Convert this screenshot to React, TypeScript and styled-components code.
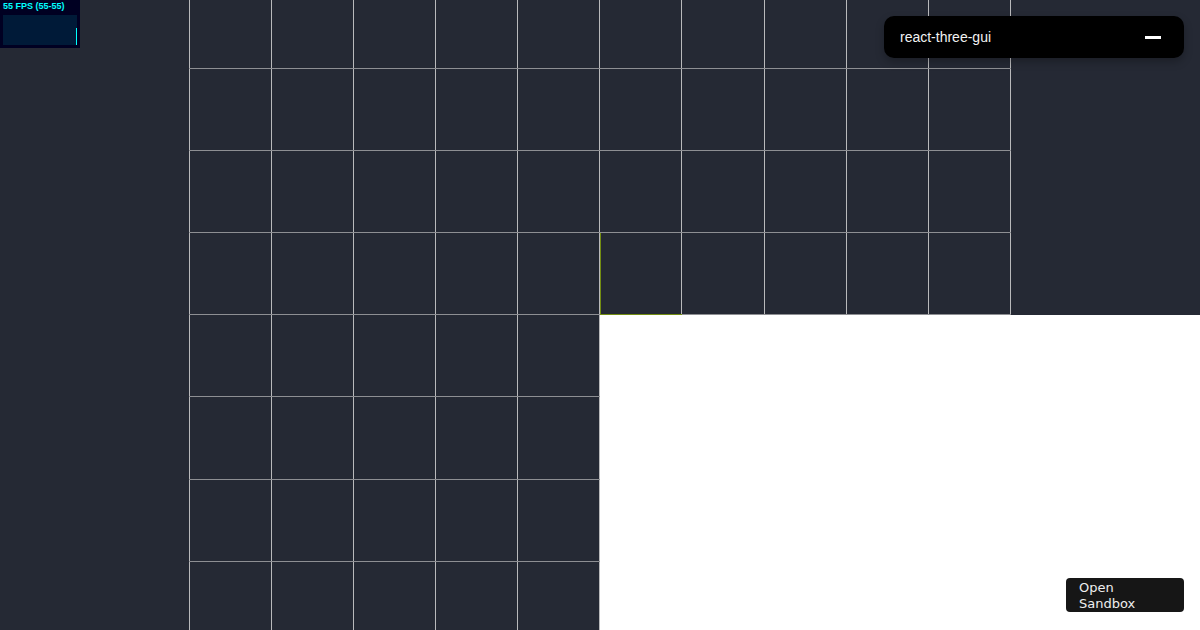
import React from "react";
import styled, { createGlobalStyle } from "styled-components";

const GlobalStyle = createGlobalStyle`
  html, body {
    margin: 0;
    padding: 0;
    background: #ffffff;
    overflow: hidden;
  }
  * {
    box-sizing: border-box;
  }
`;

const BG = "#252934";

// grid line positions as drawn by the 3d grid helper
const xs = [189, 271, 353, 435, 517, 599, 681, 764, 846, 928, 1010];
const ysTop = [68, 150, 232, 314];
const ysBottom = [396, 479, 561];

export default function App() {
  return (
    <>
      <GlobalStyle />
      <Stage>
        <TopCanvas>
          <svg width="1200" height="315" shapeRendering="crispEdges">
            {xs.map((x) => (
              <line key={"v" + x} x1={x + 0.5} y1={0} x2={x + 0.5} y2={315} stroke="#b9b9bb" />
            ))}
            {ysTop.map((y) => (
              <line key={"h" + y} x1={xs[0]} y1={y + 0.5} x2={xs[10] + 1} y2={y + 0.5} stroke="#8e8f93" />
            ))}
            <line x1={600.5} y1={233} x2={600.5} y2={315} stroke="#738c12" />
            <line x1={600} y1={314.5} x2={682} y2={314.5} stroke="#738c12" />
          </svg>
        </TopCanvas>
        <BottomCanvas>
          <svg width="600" height="315" shapeRendering="crispEdges">
            {xs.slice(0, 6).map((x) => (
              <line key={"v" + x} x1={x + 0.5} y1={0} x2={x + 0.5} y2={315} stroke="#b9b9bb" />
            ))}
            {ysBottom.map((y) => (
              <line key={"h" + y} x1={xs[0]} y1={y - 315 + 0.5} x2={600} y2={y - 315 + 0.5} stroke="#8e8f93" />
            ))}
          </svg>
        </BottomCanvas>
        <WhiteArea />

        <Stats>
          <StatsLabel>55 FPS (55-55)</StatsLabel>
          <StatsGraph>
            <StatsBar style={{ height: 17 }} />
          </StatsGraph>
        </Stats>

        <GuiPanel>
          <GuiTitle>react-three-gui</GuiTitle>
          <Minimize />
        </GuiPanel>

        <SandboxButton>
          Open
          <br />
          Sandbox
        </SandboxButton>
      </Stage>
    </>
  );
}

const Stage = styled.div`
  position: relative;
  width: 1200px;
  height: 630px;
  display: grid;
  grid-template-columns: 600px 600px;
  grid-template-rows: 315px 315px;
  overflow: hidden;
`;

const TopCanvas = styled.div`
  grid-column: 1 / span 2;
  background: ${BG};
  svg {
    display: block;
  }
`;

const BottomCanvas = styled.div`
  background: ${BG};
  svg {
    display: block;
  }
`;

const WhiteArea = styled.div`
  background: #ffffff;
`;

const Stats = styled.div`
  position: absolute;
  left: 0;
  top: 0;
  width: 80px;
  height: 48px;
  background: #000022;
  padding: 2px 3px 0 3px;
`;

const StatsLabel = styled.div`
  font-family: "Liberation Sans", Arial, sans-serif;
  font-weight: 700;
  font-size: 9px;
  line-height: 9px;
  color: #00ffff;
  height: 13px;
`;

const StatsGraph = styled.div`
  position: relative;
  width: 74px;
  height: 30px;
  background: #001a38;
`;

const StatsBar = styled.div`
  position: absolute;
  right: 0;
  bottom: 0;
  width: 1px;
  background: #00ffff;
`;

const GuiPanel = styled.div`
  position: absolute;
  top: 16px;
  right: 16px;
  width: 300px;
  height: 42px;
  background: #000000;
  border-radius: 10px;
  box-shadow: 0 4px 8px rgba(0, 0, 0, 0.25);
  display: flex;
  align-items: center;
  justify-content: space-between;
  padding: 0 23px 0 16px;
`;

const GuiTitle = styled.span`
  font-family: "Liberation Sans", Arial, sans-serif;
  font-size: 14px;
  color: #f2f2f2;
`;

const Minimize = styled.span`
  display: block;
  width: 16px;
  height: 3px;
  background: #ffffff;
`;

const SandboxButton = styled.button`
  position: absolute;
  right: 16px;
  bottom: 18px;
  width: 118px;
  height: 34px;
  border: none;
  border-radius: 4px;
  background: #161616;
  color: #eeeeee;
  font-family: "DejaVu Sans", sans-serif;
  font-size: 13px;
  line-height: 16px;
  text-align: left;
  padding: 1px 13px 0;
  cursor: pointer;
`;
